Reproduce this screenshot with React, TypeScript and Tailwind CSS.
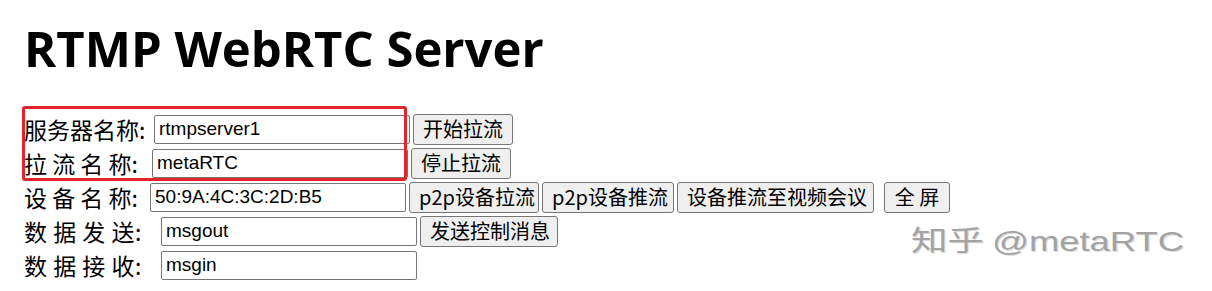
import React from "react";

const cjk = "font-['Noto_Sans_CJK_SC','Noto_Sans',sans-serif]";

function Field({ label, labelW, value, track }: { label: string; labelW: string; value: string; track?: string }) {
  return (
    <>
      <span className={`${labelW} ${track ?? ""} shrink-0 whitespace-nowrap text-[23px] leading-none text-black ${cjk}`}>{label}</span>
      <input
        readOnly
        value={value}
        className="h-[29px] w-[256px] shrink-0 rounded-[2px] border border-[#767676] bg-white px-[4px] font-['Liberation_Sans',Arial,sans-serif] text-[19px] text-black outline-none"
      />
    </>
  );
}

function Btn({ children, className = "" }: { children: React.ReactNode; className?: string }) {
  return (
    <button
      className={`h-[31px] shrink-0 whitespace-nowrap rounded-[3px] border border-[#767676] bg-[#efefef] px-[9px] text-[20px] leading-none text-black ${cjk} ${className}`}
    >
      {children}
    </button>
  );
}

export default function App() {
  return (
    <div className="relative h-[291px] w-[1212px] overflow-hidden bg-white pl-[24px]">
      <h1 className="pt-[18px] font-['Open_Sans',sans-serif] text-[49px] font-bold leading-[60px] text-black">
        RTMP WebRTC Server
      </h1>

      <div className="mt-[34px] flex flex-col">
        <div className="flex h-[34px] items-center">
          <Field label="服务器名称:" labelW="w-[130px]" value="rtmpserver1" />
          <Btn className="ml-[3px]">开始拉流</Btn>
        </div>
        <div className="flex h-[34px] items-center">
          <Field label="拉 流 名 称:" labelW="w-[128px]" value="metaRTC" />
          <Btn className="ml-[3px]">停止拉流</Btn>
        </div>
        <div className="flex h-[34px] items-center">
          <Field label="设 备 名 称:" labelW="w-[126px]" value="50:9A:4C:3C:2D:B5" />
          <div className="ml-[3px] flex gap-[3px]">
            <Btn className="w-[130px] px-0">p2p设备拉流</Btn>
            <Btn className="w-[132px] px-0">p2p设备推流</Btn>
            <Btn className="w-[197px] px-0">设备推流至视频会议</Btn>
            <Btn className="ml-[7px] w-[66px] px-0">全 屏</Btn>
          </div>
        </div>
        <div className="flex h-[34px] items-center">
          <Field label="数 据 发 送:" labelW="w-[137px]" track="tracking-[0.5px]" value="msgout" />
          <Btn className="ml-[3px] w-[138px] px-0">发送控制消息</Btn>
        </div>
        <div className="flex h-[34px] items-center">
          <Field label="数 据 接 收:" labelW="w-[137px]" track="tracking-[0.5px]" value="msgin" />
        </div>
      </div>

      {/* highlight box */}
      <div className="pointer-events-none absolute left-[22px] top-[106px] h-[75px] w-[385px] rounded-[3px] border-[3px] border-[#e3242b]" />

      {/* watermark */}
      <div
        className={`absolute left-[911px] top-[221px] origin-left scale-x-[1.3] whitespace-nowrap text-[28px] leading-[36px] text-[#a3a3a3] ${cjk} [text-shadow:1px_1px_0_#dcdcdc]`}
      >
        知乎 <span className="font-['Liberation_Sans',Arial,sans-serif]">@metaRTC</span>
      </div>
    </div>
  );
}
